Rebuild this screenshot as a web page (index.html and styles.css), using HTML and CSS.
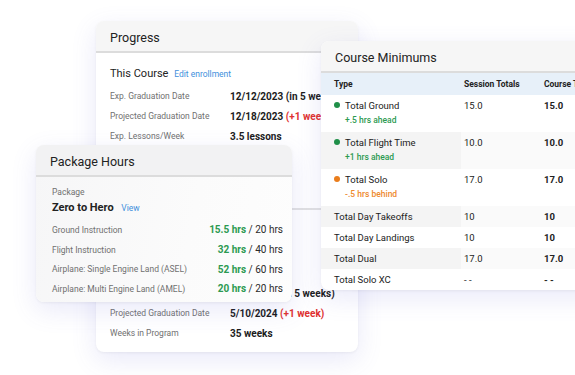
FILE: index.html
```html
<!DOCTYPE html>
<html lang="en">
  <head>
    <meta charset="UTF-8" />
    <meta name="viewport" content="width=device-width, initial-scale=1.0" />
    <title>Student Progress</title>
    <link rel="stylesheet" href="styles.css">
  </head>
  <body>
    <div class="stage">
      <section class="card progress">
        <header class="card__head">Progress</header>
        <div class="progress__section">
          <div class="progress__title">This Course <a class="link" href="#">Edit enrollment</a></div>
          <div class="kv">
            <span class="kv__label">Exp. Graduation Date</span>
            <span class="kv__value">12/12/2023 (in 5 weeks)</span>
          </div>
          <div class="kv">
            <span class="kv__label">Projected Graduation Date</span>
            <span class="kv__value">12/18/2023 <em class="late">(+1 week)</em></span>
          </div>
          <div class="kv">
            <span class="kv__label">Exp. Lessons/Week</span>
            <span class="kv__value">3.5 lessons</span>
          </div>
          <div class="kv">
            <span class="kv__label">Weeks in Course</span>
            <span class="kv__value">12 weeks</span>
          </div>
          <div class="kv">
            <span class="kv__label">Lessons Completed</span>
            <span class="kv__value">38 lessons</span>
          </div>
        </div>
        <div class="progress__section">
          <div class="progress__title">Program <a class="link" href="#">Edit program</a></div>
          <div class="kv">
            <span class="kv__label">Start Date</span>
            <span class="kv__value">9/1/2023</span>
          </div>
          <div class="kv">
            <span class="kv__label">Exp. Lessons/Week</span>
            <span class="kv__value">3 lessons</span>
          </div>
          <div class="kv">
            <span class="kv__label">Exp. Graduation Date</span>
            <span class="kv__value">4/26/2024 (in 5 weeks)</span>
          </div>
          <div class="kv">
            <span class="kv__label">Projected Graduation Date</span>
            <span class="kv__value">5/10/2024 <em class="late">(+1 week)</em></span>
          </div>
          <div class="kv">
            <span class="kv__label">Weeks in Program</span>
            <span class="kv__value">35 weeks</span>
          </div>
        </div>
      </section>

      <section class="card minimums">
        <header class="card__head">Course Minimums</header>
        <table class="mins">
          <thead>
            <tr>
              <th>Type</th>
              <th>Session Totals</th>
              <th>Course Totals</th>
            </tr>
          </thead>
          <tbody>
            <tr>
              <td><span class="dot dot--ok"></span>Total Ground<div class="mins__note ok">+.5 hrs ahead</div></td>
              <td>15.0</td>
              <td><b>15.0</b></td>
            </tr>
            <tr class="alt">
              <td><span class="dot dot--ok"></span>Total Flight Time<div class="mins__note ok">+1 hrs ahead</div></td>
              <td>10.0</td>
              <td><b>10.0</b></td>
            </tr>
            <tr>
              <td><span class="dot dot--warn"></span>Total Solo<div class="mins__note warn">-.5 hrs behind</div></td>
              <td>17.0</td>
              <td><b>17.0</b></td>
            </tr>
            <tr class="alt">
              <td>Total Day Takeoffs</td>
              <td>10</td>
              <td><b>10</b></td>
            </tr>
            <tr>
              <td>Total Day Landings</td>
              <td>10</td>
              <td><b>10</b></td>
            </tr>
            <tr class="alt">
              <td>Total Dual</td>
              <td>17.0</td>
              <td><b>17.0</b></td>
            </tr>
            <tr>
              <td>Total Solo XC</td>
              <td>- -</td>
              <td><b>- -</b></td>
            </tr>
          </tbody>
        </table>
      </section>

      <section class="card package">
        <header class="card__head">Package Hours</header>
        <div class="package__body">
          <div class="package__label">Package</div>
          <div class="package__name">Zero to Hero <a class="link" href="#">View</a></div>
          <div class="hours">
            <span>Ground Instruction</span>
            <span class="hours__value"><b>15.5 hrs</b> / 20 hrs</span>
          </div>
          <div class="hours">
            <span>Flight Instruction</span>
            <span class="hours__value"><b>32 hrs</b> / 40 hrs</span>
          </div>
          <div class="hours">
            <span>Airplane: Single Engine Land (ASEL)</span>
            <span class="hours__value"><b>52 hrs</b> / 60 hrs</span>
          </div>
          <div class="hours">
            <span>Airplane: Multi Engine Land (AMEL)</span>
            <span class="hours__value"><b>20 hrs</b> / 20 hrs</span>
          </div>
        </div>
      </section>
    </div>
  </body>
</html>
```

FILE: styles.css
```css
body {
  margin: 0;
  background: #fff;
  overflow: hidden;
  font-family: Roboto, "Liberation Sans", Arial, sans-serif;
  color: #222;
  -webkit-font-smoothing: antialiased;
}

.stage {
  position: relative;
  width: 575px;
  height: 375px;
  overflow: hidden;
}

.card {
  position: absolute;
  background: #fff;
  border-radius: 8px;
  overflow: hidden;
  box-shadow: 0 8px 26px rgba(100, 100, 210, 0.14), 0 1px 3px rgba(0, 0, 0, 0.05);
}

.card__head {
  background: #f6f6f6;
  border-bottom: 2px solid #dcdcdc;
  padding: 9px 14px 6px;
  font-size: 12.5px;
  line-height: 15px;
  color: #222;
}

.link {
  color: #3f8fdc;
  text-decoration: none;
  font-size: 8.5px;
  margin-left: 3px;
}

.late {
  color: #e0312f;
  font-style: normal;
}

/* progress */
.progress {
  left: 96px;
  top: 21px;
  width: 262px;
  z-index: 1;
}

.progress__section {
  padding: 14px 14px 22px;
  border-bottom: 2px solid #e2e2e2;
}
.progress__section:last-child {
  border-bottom: none;
  padding-bottom: 9px;
}

.progress__title {
  font-size: 11px;
  line-height: 14px;
  margin-bottom: 5px;
}

.kv {
  display: grid;
  grid-template-columns: 120px 1fr;
  height: 20px;
  align-items: center;
  white-space: nowrap;
}
.kv__label {
  font-size: 8.5px;
  color: #707070;
}
.kv__value {
  font-size: 10px;
  font-weight: 700;
  color: #1c1c1c;
}

/* package */
.package {
  left: 36px;
  top: 145px;
  width: 256px;
  z-index: 3;
  background: linear-gradient(100deg, #f6f6f7 0%, #fbfbfb 60%, #fdfdfd 100%);
}
.package .card__head {
  background: #f2f2f3;
}

.package__body {
  padding: 9px 9px 3px 16px;
}
.package__label {
  font-size: 8.5px;
  line-height: 12px;
  color: #707070;
}
.package__name {
  margin-top: 2px;
  margin-bottom: 4px;
  font-size: 11px;
  line-height: 16px;
  font-weight: 700;
}
.package__name .link {
  font-weight: 400;
  margin-left: 5px;
}

.hours {
  display: flex;
  justify-content: space-between;
  align-items: center;
  height: 19.7px;
  font-size: 8.5px;
  color: #707070;
}
.hours__value {
  font-size: 10px;
  color: #2a2a2a;
}
.hours__value b {
  color: #2c9a51;
}

/* course minimums */
.minimums {
  left: 321px;
  top: 41px;
  width: 300px;
  z-index: 2;
}

.mins {
  width: 100%;
  border-collapse: collapse;
  table-layout: fixed;
  font-size: 9.5px;
}
.mins th {
  background: #e7f0f9;
  height: 22px;
  padding: 0 0 0 3px;
  text-align: left;
  font-size: 8.5px;
  font-weight: 700;
  color: #222;
  white-space: nowrap;
}
.mins th:first-child {
  width: 127px;
  padding-left: 13px;
}
.mins th:nth-child(2) {
  width: 77px;
}
.mins td {
  padding: 4px 0 4px 3px;
  line-height: 13px;
  vertical-align: top;
  white-space: nowrap;
}
.mins td:first-child {
  padding-left: 13px;
}
.mins tr.alt td {
  background: #fafafa;
}
.mins tr.alt td:first-child {
  background: #f4f4f4;
}
.mins td b {
  font-weight: 700;
}

.mins__note {
  margin-top: 2px;
  margin-bottom: 2px;
  padding-left: 11px;
  font-size: 8.5px;
  line-height: 12px;
  font-weight: 500;
}
.ok {
  color: #2c9a51;
}
.warn {
  color: #ee8a2e;
}

.dot {
  display: inline-block;
  width: 6px;
  height: 6px;
  border-radius: 50%;
  margin-right: 5px;
  vertical-align: 1px;
}
.dot--ok {
  background: #1f8f48;
}
.dot--warn {
  background: #ea7d1c;
}
```
